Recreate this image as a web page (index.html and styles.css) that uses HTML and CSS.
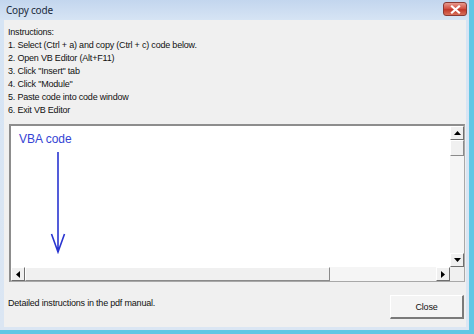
FILE: index.html
```html
<!DOCTYPE html>
<html>
<head>
<meta charset="utf-8">
<link rel="stylesheet" href="styles.css">
</head>
<body>
<div class="window">
  <div class="titlebar">
    <span class="title">Copy code</span>
    <span class="close-x"><svg width="11" height="9" viewBox="0 0 11 9"><path d="M2 1.5 L9 7.5 M9 1.5 L2 7.5" stroke="#fff" stroke-width="2.2" stroke-linecap="square"/></svg></span>
  </div>
  <div class="client">
    <div class="instructions">
      <div>Instructions:</div>
      <div>1. Select (Ctrl + a) and copy (Ctrl + c) code below.</div>
      <div>2. Open VB Editor (Alt+F11)</div>
      <div>3. Click "Insert" tab</div>
      <div>4. Click "Module"</div>
      <div>5. Paste code into code window</div>
      <div>6. Exit VB Editor</div>
    </div>
    <div class="codebox">
      <div class="code-main">
        <div class="code-area">
          <div class="vba">VBA code</div>
          <svg class="arrow" width="20" height="102" viewBox="0 0 20 102"><path d="M10 0 V100 M3.5 82 L10 100 L16.5 82" stroke="#2a35d0" stroke-width="1.6" fill="none"/></svg>
        </div>
        <div class="vscroll">
          <div class="sbtn"><svg width="7" height="4" viewBox="0 0 7 4"><path d="M0 4 L3.5 0 L7 4Z" fill="#000"/></svg></div>
          <div class="vthumb"></div>
          <div class="vtrack"></div>
          <div class="sbtn"><svg width="7" height="4" viewBox="0 0 7 4"><path d="M0 0 L3.5 4 L7 0Z" fill="#000"/></svg></div>
        </div>
      </div>
      <div class="hscroll">
        <div class="sbtn"><svg width="4" height="7" viewBox="0 0 4 7"><path d="M4 0 L0 3.5 L4 7Z" fill="#000"/></svg></div>
        <div class="hthumb"></div>
        <div class="htrack"></div>
        <div class="sbtn"><svg width="4" height="7" viewBox="0 0 4 7"><path d="M0 0 L4 3.5 L0 7Z" fill="#000"/></svg></div>
        <div class="corner"></div>
      </div>
    </div>
    <div class="footer">
      <span class="note">Detailed instructions in the pdf manual.</span>
      <button class="closebtn">Close</button>
    </div>
  </div>
</div>
</body>
</html>
```

FILE: styles.css
```css
html, body {
  margin: 0;
  padding: 0;
}
body {
  width: 474px;
  height: 334px;
  background: #62c7e4;
  overflow: hidden;
}
.window {
  width: 469px;
  height: 330px;
  box-sizing: border-box;
  background: linear-gradient(#c3d6ee, #d6e4f4 20px, #dbe6f3);
  padding: 0 3px 3px 4px;
  display: flex;
  flex-direction: column;
}
.titlebar {
  height: 20px;
  flex: none;
  display: flex;
  align-items: center;
  justify-content: space-between;
  padding: 0 0 0 2px;
}
.title {
  font-family: "Noto Sans", sans-serif;
  font-size: 10px;
  letter-spacing: -0.2px;
  color: #1a2a3a;
}
.close-x {
  width: 24px;
  height: 14px;
  margin-top: -2px;
  margin-right: -1px;
  box-sizing: border-box;
  border: 1px solid #8a3a34;
  border-radius: 3px;
  background: linear-gradient(#e89a8e, #d35446 45%, #c2382a 55%, #d8705a);
  display: flex;
  align-items: center;
  justify-content: center;
}
.client {
  flex: 1;
  background: #f0f0f0;
  display: flex;
  flex-direction: column;
  font-family: "Liberation Sans", Arial, sans-serif;
  font-size: 9px;
  letter-spacing: -0.2px;
  color: #111;
}
.instructions {
  padding: 6px 0 0 4px;
  line-height: 13px;
  height: 98px;
}
.codebox {
  margin: 0 1px 0 5px;
  height: 158px;
  box-sizing: border-box;
  border-top: 2px solid #8d8d8d;
  border-left: 2px solid #8d8d8d;
  border-right: 1px solid #a8a8a8;
  border-bottom: 1px solid #a8a8a8;
  background: #fff;
  display: flex;
  flex-direction: column;
}
.code-main {
  flex: 1;
  display: flex;
  min-height: 0;
}
.code-area {
  flex: 1;
  padding: 6px 0 0 8px;
  display: flex;
  flex-direction: column;
}
.vba {
  font-family: "Liberation Sans", Arial, sans-serif;
  font-size: 12px;
  letter-spacing: 0;
  color: #3544d4;
  line-height: 14px;
}
.arrow {
  margin: 6px 0 0 29px;
  display: block;
}
.vscroll {
  width: 14px;
  display: flex;
  flex-direction: column;
  background: #f5f5f5;
}
.sbtn {
  width: 14px;
  height: 14px;
  flex: none;
  box-sizing: border-box;
  background: #f0f0f0;
  border-top: 1px solid #fff;
  border-left: 1px solid #fff;
  border-right: 1px solid #6e6e6e;
  border-bottom: 1px solid #6e6e6e;
  display: flex;
  align-items: center;
  justify-content: center;
}
.vthumb {
  height: 16px;
  flex: none;
  box-sizing: border-box;
  background: #f0f0f0;
  border-top: 1px solid #fff;
  border-left: 1px solid #fff;
  border-right: 1px solid #8a8a8a;
  border-bottom: 1px solid #8a8a8a;
}
.vtrack, .htrack {
  flex: 1;
  background: #f5f5f5;
}
.hscroll {
  height: 14px;
  flex: none;
  display: flex;
  background: #f5f5f5;
}
.hthumb {
  width: 305px;
  flex: none;
  box-sizing: border-box;
  background: #f0f0f0;
  border-top: 1px solid #fff;
  border-left: 1px solid #fff;
  border-right: 1px solid #8a8a8a;
  border-bottom: 1px solid #8a8a8a;
}
.corner {
  width: 14px;
  flex: none;
  background: #f0f0f0;
}
.footer {
  flex: 1;
  display: flex;
  align-items: flex-start;
  justify-content: space-between;
  padding: 12px 2px 0 4px;
}
.note {
  margin-top: 3px;
  line-height: 13px;
}
.closebtn {
  margin-top: 1px;
  width: 74px;
  height: 24px;
  box-sizing: border-box;
  background: #f4f4f4;
  border-top: 1px solid #fff;
  border-left: 1px solid #fff;
  border-right: 2px solid #7a7a7a;
  border-bottom: 2px solid #7a7a7a;
  font-family: "Liberation Sans", Arial, sans-serif;
  font-size: 9px;
  letter-spacing: -0.2px;
  color: #111;
  padding: 0;
}
```
